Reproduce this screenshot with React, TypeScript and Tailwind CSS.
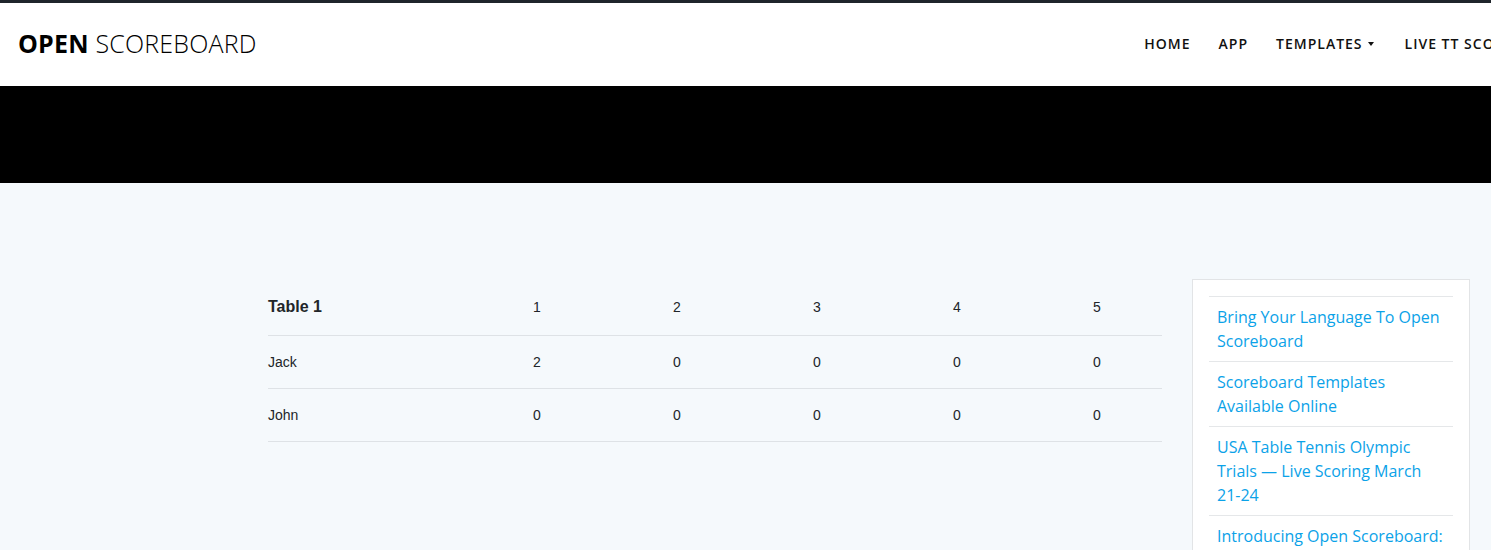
const navItems = ['Home', 'App', 'Templates', 'Live TT Scoring'];

const scores = [
  { name: 'Jack', games: [2, 0, 0, 0, 0] },
  { name: 'John', games: [0, 0, 0, 0, 0] },
];

const posts = [
  'Bring Your Language To Open Scoreboard',
  'Scoreboard Templates Available Online',
  'USA Table Tennis Olympic Trials — Live Scoring March 21-24',
  'Introducing Open Scoreboard: Free Scoring Software',
];

const cols = 'grid grid-cols-[199px_140px_140px_140px_140px_135px]';

const App = () => {
  return (
    <div className="min-h-[550px] overflow-hidden bg-[#f5f9fc] font-['Open_Sans',sans-serif]">
      {/* Header */}
      <header className="border-t-[3px] border-[#1f252b] bg-white">
        <div className="flex h-[83px] items-center justify-between pl-[18px]">
          <a href="#" className="pb-[2px] text-[25px] leading-none text-black tracking-[0.2px]">
            <span className="font-bold">OPEN</span> <span className="font-light">SCOREBOARD</span>
          </a>
          <nav className="-mr-[56px] flex shrink-0 items-center pb-[2px]">
            {navItems.map((item) => (
              <a
                key={item}
                href="#"
                className="flex items-center whitespace-nowrap px-[14px] text-[14px] font-semibold uppercase tracking-[1px] text-[#111]"
              >
                {item}
                {item === 'Templates' && (
                  <span className="ml-[5px] mr-[3px] inline-block border-x-[3.5px] border-t-[4px] border-x-transparent border-t-[#111]" />
                )}
              </a>
            ))}
          </nav>
        </div>
      </header>

      {/* Banner */}
      <div className="h-[97px] bg-black" />

      {/* Content */}
      <main className="flex items-start gap-[30px] pl-[268px] pt-[96px]">
        <div className="w-[894px] font-['Liberation_Sans',Arial,sans-serif] text-[#212529]">
          <div className={`${cols} border-b border-[#dee2e6] py-4 leading-6`}>
            <div className="text-[16px] font-bold">Table 1</div>
            {[1, 2, 3, 4, 5].map((n, i) => (
              <div key={n} className={`text-center text-[14px] ${i === 4 ? 'pl-[5px]' : ''}`}>
                {n}
              </div>
            ))}
          </div>
          {scores.map((row) => (
            <div key={row.name} className={`${cols} border-b border-[#dee2e6] py-4 text-[14px] leading-5`}>
              <div>{row.name}</div>
              {row.games.map((g, i) => (
                <div key={i} className={`text-center ${i === 4 ? 'pl-[5px]' : ''}`}>
                  {g}
                </div>
              ))}
            </div>
          ))}
        </div>

        {/* Recent posts */}
        <aside className="w-[278px] border border-[#e2e4e6] bg-white p-4">
          <ul>
            {posts.map((post) => (
              <li key={post} className="border-t border-[#e5e7e9] px-2 py-2">
                <a href="#" className="text-[16px] leading-6 text-[#0ba2e8]">
                  {post}
                </a>
              </li>
            ))}
          </ul>
        </aside>
      </main>
    </div>
  );
};

export default App;
